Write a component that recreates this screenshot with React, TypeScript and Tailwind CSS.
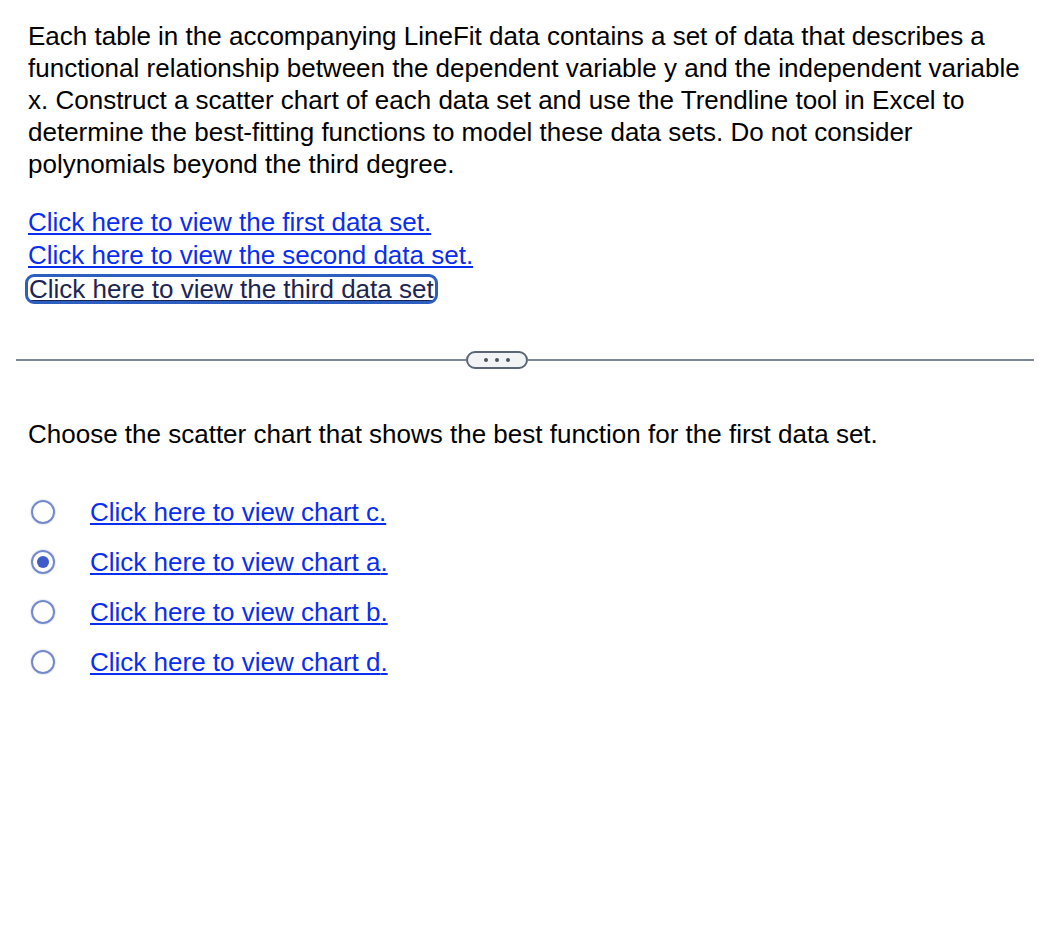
const options = ["c", "a", "b", "d"];

function Radio({ checked }: { checked: boolean }) {
  return (
    <span className="flex h-[24px] w-[24px] shrink-0 items-center justify-center rounded-full border-[2.5px] border-[#7489cc] shadow-[0_0_2px_rgba(116,137,204,0.5)]">
      {checked && <span className="h-[12px] w-[12px] rounded-full bg-[#3d5cc7]" />}
    </span>
  );
}

export default function App() {
  return (
    <div className="min-h-[940px] w-[1038px] bg-white font-['Liberation_Sans',Arial,sans-serif] text-[26px] text-black">
      <div className="pl-[28px] pr-[8px] pt-[20px]">
        <p className="leading-[32px]">
          Each table in the accompanying LineFit data contains a set of data that describes a functional relationship
          between the dependent variable y and the independent variable x. Construct a scatter chart of each data set and
          use the Trendline tool in Excel to determine the best-fitting functions to model these data sets. Do not consider
          polynomials beyond the third degree.
        </p>
        <div className="mt-[26px] flex flex-col items-start leading-[33px]">
          <a href="#" className="text-[#0a2ef0] underline">Click here to view the first data set.</a>
          <a href="#" className="text-[#0a2ef0] underline">Click here to view the second data set.</a>
          <div className="flex h-[33px] items-center">
            <a href="#" className="rounded-[6px] px-[1px] leading-[24px] text-[#1c2552] underline outline-[3px] outline-solid outline-[#2d5fc0]">
              Click here to view the third data set
            </a>
          </div>
        </div>
      </div>

      <div className="mt-[46px] flex items-center pl-[16px] pr-[4px]">
        <div className="h-[2px] w-[450px] bg-[#7d8796]" />
        <div className="flex h-[18px] w-[62px] items-center justify-center gap-[7px] rounded-full border-2 border-[#5b6675] bg-[#f2f3f5]">
          <span className="h-[4px] w-[4px] rounded-full bg-[#4a5360]" />
          <span className="h-[4px] w-[4px] rounded-full bg-[#4a5360]" />
          <span className="h-[4px] w-[4px] rounded-full bg-[#4a5360]" />
        </div>
        <div className="h-[2px] flex-1 bg-[#7d8796]" />
      </div>

      <p className="mt-[49px] px-[28px] leading-[32px]">
        Choose the scatter chart that shows the best function for the first data set.
      </p>

      <div className="mt-[46px] flex flex-col gap-[18px] px-[31px]">
        {options.map((o) => (
          <label key={o} className="flex h-[32px] items-center gap-[35px]">
            <Radio checked={o === "a"} />
            <a href="#" className="text-[#0a2ef0] underline">Click here to view chart {o}.</a>
          </label>
        ))}
      </div>
    </div>
  );
}
